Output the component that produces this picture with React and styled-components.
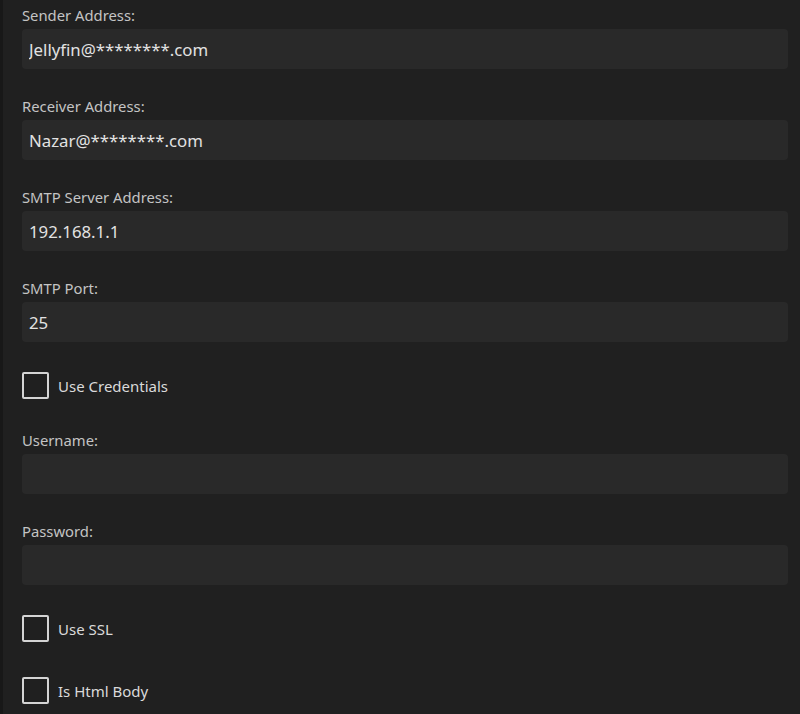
import React from 'react'
import styled, { createGlobalStyle } from 'styled-components'

const GlobalStyle = createGlobalStyle`
    html, body {
        margin: 0;
        padding: 0;
        background: #202020;
        height: 100%;
    }
    #root {
        min-height: 100%;
    }
`

const Page = styled.div`
    display: flex;
    min-height: 714px;
    background: #202020;
    font-family: "Noto Sans", "Open Sans", sans-serif;
    overflow: hidden;
`

const Rail = styled.div`
    width: 3px;
    flex: 0 0 3px;
    background: #181818;
`

const Form = styled.div`
    flex: 1;
    display: flex;
    flex-direction: column;
    padding: 5px 12px 0 19px;
`

const Field = styled.div`
    display: flex;
    flex-direction: column;
    margin-bottom: 27px;
`

const Label = styled.label`
    font-size: 14.8px;
    line-height: 20px;
    color: #c4c4c4;
    margin-bottom: 4px;
`

const Input = styled.input`
    box-sizing: border-box;
    height: 40px;
    width: 100%;
    border: none;
    outline: none;
    border-radius: 4px;
    background: #292929;
    color: #e2e2e2;
    font-family: inherit;
    font-size: 16.8px;
    padding: 0 7px;
`

const CheckRow = styled.label`
    display: flex;
    align-items: center;
    gap: 9px;
    height: 27px;
    margin-top: ${props => props.top || 0}px;
    margin-bottom: ${props => props.bottom || 0}px;
    color: #dadada;
    font-size: 15px;
`

const Box = styled.span`
    box-sizing: border-box;
    width: 27px;
    height: 27px;
    border: 2px solid #d4d4d4;
    border-radius: 2px;
`

function TextField({ label, value }) {
    return (
        <Field>
            <Label>{label}</Label>
            <Input defaultValue={value} />
        </Field>
    )
}

export default function App() {
    return (
        <Page>
            <GlobalStyle />
            <Rail />
            <Form>
                <TextField label="Sender Address:" value="Jellyfin@********.com" />
                <TextField label="Receiver Address:" value="Nazar@********.com" />
                <TextField label="SMTP Server Address:" value="192.168.1.1" />
                <TextField label="SMTP Port:" value="25" />
                <CheckRow top={3} bottom={31}><Box />Use Credentials</CheckRow>
                <TextField label="Username:" value="" />
                <TextField label="Password:" value="" />
                <CheckRow top={3} bottom={35}><Box />Use SSL</CheckRow>
                <CheckRow><Box />Is Html Body</CheckRow>
            </Form>
        </Page>
    )
}
